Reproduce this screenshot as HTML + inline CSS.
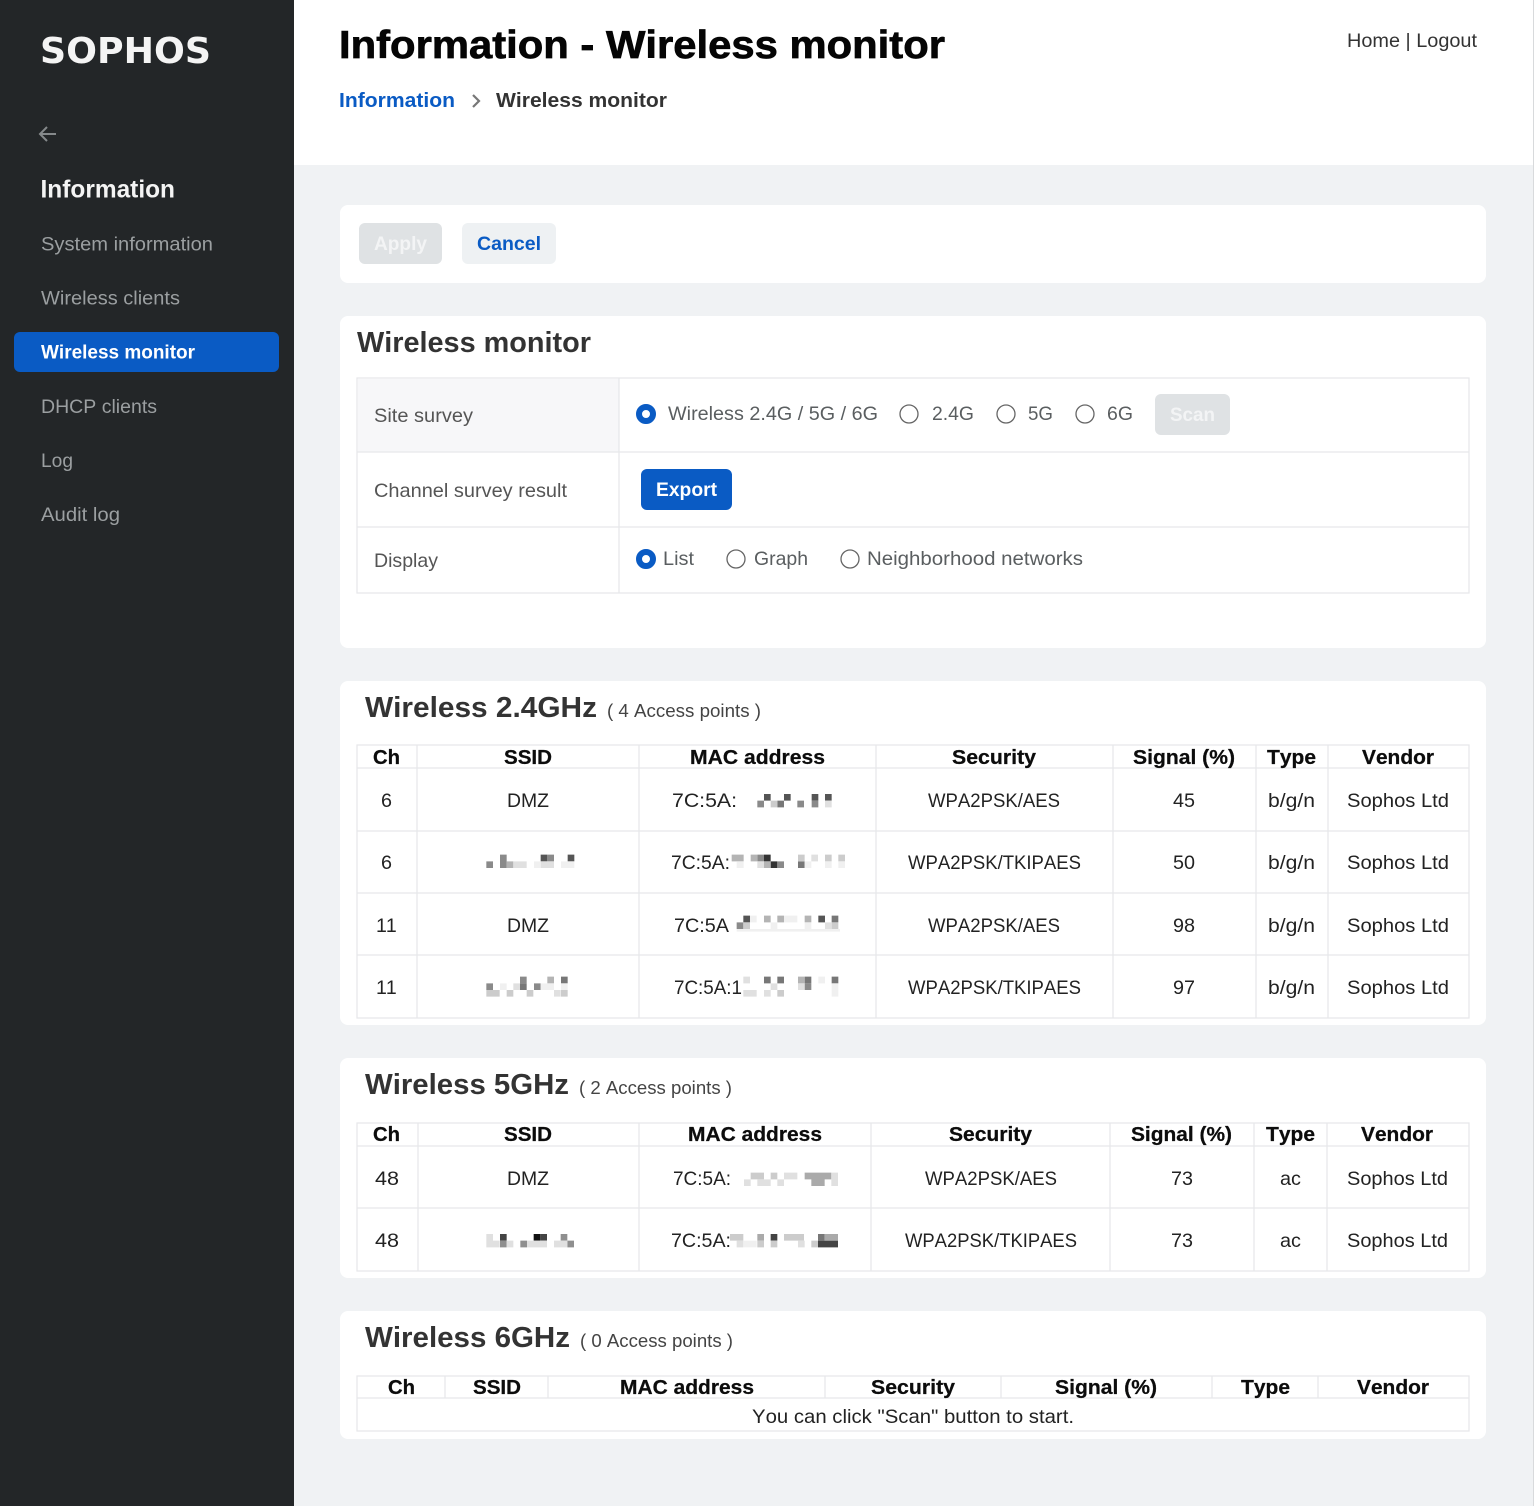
<!DOCTYPE html>
<html lang="en"><head><meta charset="utf-8"><title>Information - Wireless monitor</title>
<style>
html,body{margin:0;padding:0;width:1536px;height:1506px;overflow:hidden;background:#f0f2f4}
.b{position:absolute}
svg{position:absolute;left:0;top:0}
text{font-family:"Liberation Sans",sans-serif;font-size:19.5px;fill:#222;font-kerning:none}
.s{fill:#9b9fa1}
.l{fill:#555}
.o{fill:#5a5e60}
.h{font-weight:bold;font-size:20px;fill:#0c0c0c;stroke:#0c0c0c;stroke-width:.25px}
.t{font-weight:bold;font-size:29px;fill:#333}
.p{font-size:18px;fill:#444}
.w{font-weight:bold;fill:#fff}
</style></head><body>
<div class="b" style="left:0;top:0;width:294px;height:1506px;background:#232628"></div>
<div class="b" style="left:294px;top:0;width:1239px;height:165px;background:#fff"></div>
<div class="b" style="left:1533px;top:0;width:1px;height:1506px;background:#d8dadc"></div>
<div class="b" style="left:1534px;top:0;width:2px;height:1506px;background:#fff"></div>
<div class="b" style="left:14px;top:332px;width:265px;height:40px;background:#0a5bc4;border-radius:6px"></div>
<div class="b" style="left:340px;top:205px;width:1146px;height:78px;background:#fff;border-radius:8px"></div>
<div class="b" style="left:340px;top:316px;width:1146px;height:332px;background:#fff;border-radius:8px"></div>
<div class="b" style="left:340px;top:681px;width:1146px;height:344px;background:#fff;border-radius:8px"></div>
<div class="b" style="left:340px;top:1058px;width:1146px;height:220px;background:#fff;border-radius:8px"></div>
<div class="b" style="left:340px;top:1311px;width:1146px;height:128px;background:#fff;border-radius:8px"></div>
<div class="b" style="left:359px;top:223px;width:83px;height:41px;background:#dfe2e4;border-radius:6px"></div>
<div class="b" style="left:462px;top:223px;width:94px;height:41px;background:#eef1f3;border-radius:6px"></div>
<div class="b" style="left:358px;top:379px;width:261px;height:73px;background:#f7f7f9"></div>
<div class="b" style="left:1155px;top:394px;width:75px;height:41px;background:#dfe2e4;border-radius:6px"></div>
<div class="b" style="left:641px;top:469px;width:91px;height:41px;background:#0a5bc4;border-radius:6px"></div>

<svg width="1536" height="1506" viewBox="0 0 1536 1506" xmlns="http://www.w3.org/2000/svg">
<!-- Table lines -->
<g fill="none" stroke="#e7e8ea" stroke-width="1.3">
<path d="M357 378H1469V593H357ZM619 378V593M357 452H1469M357 527H1469"/>
<path d="M357 745H1469V1018H357ZM357 768H1469M357 831H1469M357 893H1469M357 955H1469M417 745V1018M639 745V1018M876 745V1018M1113 745V1018M1256 745V1018M1328 745V1018"/>
<path d="M357 1123H1469V1271H357ZM357 1146H1469M357 1208H1469M418 1123V1271M639 1123V1271M871 1123V1271M1110 1123V1271M1254 1123V1271M1327 1123V1271"/>
<path d="M357 1376H1469V1431H357ZM357 1398H1469M445 1376V1398M548 1376V1398M825 1376V1398M1001 1376V1398M1212 1376V1398M1318 1376V1398"/>
</g>
<!-- Logo and sidebar -->
<text x="40" y="63" textLength="171" lengthAdjust="spacingAndGlyphs" style="font-family:'DejaVu Sans',sans-serif;font-size:36px;font-weight:bold;fill:#f4f4f4">SOPHOS</text>
<path d="M56 134H40M47 127l-7 7 7 7" fill="none" stroke="#85898b" stroke-width="2"/>
<text x="40.5" y="197.5" textLength="134.5" lengthAdjust="spacingAndGlyphs" style="font-size:25px;font-weight:bold;fill:#f4f4f4">Information</text>
<text class="s" x="41" y="250.5" textLength="172" lengthAdjust="spacingAndGlyphs">System information</text>
<text class="s" x="41" y="304.5" textLength="139" lengthAdjust="spacingAndGlyphs">Wireless clients</text>
<text class="w" x="41" y="358.5" textLength="154" lengthAdjust="spacingAndGlyphs">Wireless monitor</text>
<text class="s" x="41" y="413" textLength="116" lengthAdjust="spacingAndGlyphs">DHCP clients</text>
<text class="s" x="41" y="467" textLength="32" lengthAdjust="spacingAndGlyphs">Log</text>
<text class="s" x="41" y="521" textLength="79" lengthAdjust="spacingAndGlyphs">Audit log</text>
<!-- Header -->
<text x="339" y="58" textLength="606" lengthAdjust="spacingAndGlyphs" style="font-size:39px;font-weight:bold;fill:#050505;stroke:#050505;stroke-width:.7px">Information - Wireless monitor</text>
<text x="339" y="107" textLength="116" lengthAdjust="spacingAndGlyphs" style="font-size:20.5px;font-weight:bold;fill:#0a5bc4">Information</text>
<path d="M473 95l6 6-6 6" fill="none" stroke="#777" stroke-width="2.2"/>
<text x="496" y="107" textLength="171" lengthAdjust="spacingAndGlyphs" style="font-size:20.5px;font-weight:bold;fill:#333">Wireless monitor</text>
<text x="1347" y="47" textLength="130" lengthAdjust="spacingAndGlyphs" style="fill:#333">Home | Logout</text>
<!-- Buttons -->
<text class="w" x="374" y="250" textLength="53" lengthAdjust="spacingAndGlyphs" style="fill:#f3f4f5">Apply</text>
<text x="477" y="250" textLength="64" lengthAdjust="spacingAndGlyphs" style="font-weight:bold;fill:#0a5bc4">Cancel</text>
<!-- Wireless monitor settings -->
<text class="t" x="357" y="352" textLength="234" lengthAdjust="spacingAndGlyphs">Wireless monitor</text>
<text class="l" x="374" y="422" textLength="99" lengthAdjust="spacingAndGlyphs">Site survey</text>
<text class="l" x="374" y="497" textLength="193" lengthAdjust="spacingAndGlyphs">Channel survey result</text>
<text class="l" x="374" y="567" textLength="64" lengthAdjust="spacingAndGlyphs">Display</text>
<g fill="#fff" stroke="#666" stroke-width="1.3">
<circle cx="909" cy="414" r="9"/><circle cx="1006" cy="414" r="9"/><circle cx="1085" cy="414" r="9"/><circle cx="736" cy="559" r="9"/><circle cx="850" cy="559" r="9"/>
</g>
<circle cx="646" cy="414" r="7" fill="#fff" stroke="#0a5bc4" stroke-width="6"/>
<circle cx="646" cy="559" r="7" fill="#fff" stroke="#0a5bc4" stroke-width="6"/>
<text class="o" x="668" y="420" textLength="210" lengthAdjust="spacingAndGlyphs">Wireless 2.4G / 5G / 6G</text>
<text class="o" x="932" y="420" textLength="42" lengthAdjust="spacingAndGlyphs">2.4G</text>
<text class="o" x="1028" y="420" textLength="25" lengthAdjust="spacingAndGlyphs">5G</text>
<text class="o" x="1107" y="420" textLength="26" lengthAdjust="spacingAndGlyphs">6G</text>
<text class="w" x="1170" y="421" textLength="45" lengthAdjust="spacingAndGlyphs" style="fill:#f3f4f5">Scan</text>
<text class="w" x="656" y="496" textLength="61" lengthAdjust="spacingAndGlyphs">Export</text>
<text class="o" x="663" y="565" textLength="31" lengthAdjust="spacingAndGlyphs">List</text>
<text class="o" x="754" y="565" textLength="54" lengthAdjust="spacingAndGlyphs">Graph</text>
<text class="o" x="867" y="565" textLength="216" lengthAdjust="spacingAndGlyphs">Neighborhood networks</text>
<!-- 2.4GHz -->
<text class="t" x="365" y="717" textLength="232" lengthAdjust="spacingAndGlyphs">Wireless 2.4GHz</text>
<text class="p" x="607" y="717" textLength="154" lengthAdjust="spacingAndGlyphs">( 4 Access points )</text>
<text class="h" x="373" y="764" textLength="27" lengthAdjust="spacingAndGlyphs">Ch</text>
<text class="h" x="504" y="764" textLength="48" lengthAdjust="spacingAndGlyphs">SSID</text>
<text class="h" x="690" y="764" textLength="135" lengthAdjust="spacingAndGlyphs">MAC address</text>
<text class="h" x="952" y="764" textLength="84" lengthAdjust="spacingAndGlyphs">Security</text>
<text class="h" x="1133" y="764" textLength="102" lengthAdjust="spacingAndGlyphs">Signal (%)</text>
<text class="h" x="1267" y="764" textLength="49" lengthAdjust="spacingAndGlyphs">Type</text>
<text class="h" x="1362" y="764" textLength="72" lengthAdjust="spacingAndGlyphs">Vendor</text>
<text x="381" y="807" textLength="11" lengthAdjust="spacingAndGlyphs">6</text>
<text x="507" y="807" textLength="42" lengthAdjust="spacingAndGlyphs">DMZ</text>
<text x="672" y="807" textLength="65" lengthAdjust="spacingAndGlyphs">7C:5A:</text>
<text x="928" y="807" textLength="132" lengthAdjust="spacingAndGlyphs">WPA2PSK/AES</text>
<text x="1173" y="807" textLength="22" lengthAdjust="spacingAndGlyphs">45</text>
<text x="1268" y="807" textLength="47" lengthAdjust="spacingAndGlyphs">b/g/n</text>
<text x="1347" y="807" textLength="102" lengthAdjust="spacingAndGlyphs">Sophos Ltd</text>
<text x="381" y="869" textLength="11" lengthAdjust="spacingAndGlyphs">6</text>
<text x="671" y="869" textLength="59" lengthAdjust="spacingAndGlyphs">7C:5A:</text>
<text x="908" y="869" textLength="173" lengthAdjust="spacingAndGlyphs">WPA2PSK/TKIPAES</text>
<text x="1173" y="869" textLength="22" lengthAdjust="spacingAndGlyphs">50</text>
<text x="1268" y="869" textLength="47" lengthAdjust="spacingAndGlyphs">b/g/n</text>
<text x="1347" y="869" textLength="102" lengthAdjust="spacingAndGlyphs">Sophos Ltd</text>
<text x="376" y="932" style="letter-spacing:-1px">11</text>
<text x="507" y="932" textLength="42" lengthAdjust="spacingAndGlyphs">DMZ</text>
<text x="674" y="932" textLength="55" lengthAdjust="spacingAndGlyphs">7C:5A</text>
<text x="928" y="932" textLength="132" lengthAdjust="spacingAndGlyphs">WPA2PSK/AES</text>
<text x="1173" y="932" textLength="22" lengthAdjust="spacingAndGlyphs">98</text>
<text x="1268" y="932" textLength="47" lengthAdjust="spacingAndGlyphs">b/g/n</text>
<text x="1347" y="932" textLength="102" lengthAdjust="spacingAndGlyphs">Sophos Ltd</text>
<text x="376" y="994" style="letter-spacing:-1px">11</text>
<text x="674" y="994" textLength="68" lengthAdjust="spacingAndGlyphs">7C:5A:1</text>
<text x="908" y="994" textLength="173" lengthAdjust="spacingAndGlyphs">WPA2PSK/TKIPAES</text>
<text x="1173" y="994" textLength="22" lengthAdjust="spacingAndGlyphs">97</text>
<text x="1268" y="994" textLength="47" lengthAdjust="spacingAndGlyphs">b/g/n</text>
<text x="1347" y="994" textLength="102" lengthAdjust="spacingAndGlyphs">Sophos Ltd</text>
<!-- 5GHz -->
<text class="t" x="365" y="1094" textLength="204" lengthAdjust="spacingAndGlyphs">Wireless 5GHz</text>
<text class="p" x="579" y="1094" textLength="153" lengthAdjust="spacingAndGlyphs">( 2 Access points )</text>
<text class="h" x="373" y="1141" textLength="27" lengthAdjust="spacingAndGlyphs">Ch</text>
<text class="h" x="504" y="1141" textLength="48" lengthAdjust="spacingAndGlyphs">SSID</text>
<text class="h" x="688" y="1141" textLength="134" lengthAdjust="spacingAndGlyphs">MAC address</text>
<text class="h" x="949" y="1141" textLength="83" lengthAdjust="spacingAndGlyphs">Security</text>
<text class="h" x="1131" y="1141" textLength="101" lengthAdjust="spacingAndGlyphs">Signal (%)</text>
<text class="h" x="1266" y="1141" textLength="49" lengthAdjust="spacingAndGlyphs">Type</text>
<text class="h" x="1361" y="1141" textLength="72" lengthAdjust="spacingAndGlyphs">Vendor</text>
<text x="375" y="1185" textLength="24" lengthAdjust="spacingAndGlyphs">48</text>
<text x="507" y="1185" textLength="42" lengthAdjust="spacingAndGlyphs">DMZ</text>
<text x="673" y="1185" textLength="58" lengthAdjust="spacingAndGlyphs">7C:5A:</text>
<text x="925" y="1185" textLength="132" lengthAdjust="spacingAndGlyphs">WPA2PSK/AES</text>
<text x="1171" y="1185" textLength="22" lengthAdjust="spacingAndGlyphs">73</text>
<text x="1280" y="1185" textLength="21" lengthAdjust="spacingAndGlyphs">ac</text>
<text x="1347" y="1185" textLength="101" lengthAdjust="spacingAndGlyphs">Sophos Ltd</text>
<text x="375" y="1247" textLength="24" lengthAdjust="spacingAndGlyphs">48</text>
<text x="671" y="1247" textLength="60" lengthAdjust="spacingAndGlyphs">7C:5A:</text>
<text x="905" y="1247" textLength="172" lengthAdjust="spacingAndGlyphs">WPA2PSK/TKIPAES</text>
<text x="1171" y="1247" textLength="22" lengthAdjust="spacingAndGlyphs">73</text>
<text x="1280" y="1247" textLength="21" lengthAdjust="spacingAndGlyphs">ac</text>
<text x="1347" y="1247" textLength="101" lengthAdjust="spacingAndGlyphs">Sophos Ltd</text>
<!-- 6GHz -->
<text class="t" x="365" y="1347" textLength="205" lengthAdjust="spacingAndGlyphs">Wireless 6GHz</text>
<text class="p" x="580" y="1347" textLength="153" lengthAdjust="spacingAndGlyphs">( 0 Access points )</text>
<text class="h" x="388" y="1394" textLength="27" lengthAdjust="spacingAndGlyphs">Ch</text>
<text class="h" x="473" y="1394" textLength="48" lengthAdjust="spacingAndGlyphs">SSID</text>
<text class="h" x="620" y="1394" textLength="134" lengthAdjust="spacingAndGlyphs">MAC address</text>
<text class="h" x="871" y="1394" textLength="84" lengthAdjust="spacingAndGlyphs">Security</text>
<text class="h" x="1055" y="1394" textLength="102" lengthAdjust="spacingAndGlyphs">Signal (%)</text>
<text class="h" x="1241" y="1394" textLength="49" lengthAdjust="spacingAndGlyphs">Type</text>
<text class="h" x="1357" y="1394" textLength="72" lengthAdjust="spacingAndGlyphs">Vendor</text>
<text x="752" y="1423" textLength="322" lengthAdjust="spacingAndGlyphs">You can click &quot;Scan&quot; button to start.</text>
<!-- Pixelated redactions -->
<g transform="translate(340 740) scale(.33333)">
<path fill="#555" d="M1272 162h20v20h-20zM1332 162h20v20h-20zM1415 162h20v20h-20zM1455 162h20v20h-20zM602 344h20v20h-20zM683 344h20v20h-20zM1210 527h20v20h-20zM1435 527h20v20h-20z"/>
<path fill="#333" d="M1272 344h20v20h-20zM1292 364h20v20h-20z"/>
<path fill="#777" d="M1312 182h20v20h-20zM1374 364h20v20h-20zM1475 527h20v20h-20zM540 730h20v20h-20zM663 710h20v20h-20zM1272 710h20v20h-20zM1312 710h20v20h-20zM1394 710h20v20h-20zM1475 710h20v20h-20z"/>
<path fill="#8a8a8a" d="M1252 182h20v20h-20zM1372 182h20v20h-20zM1415 182h20v20h-20zM439 364h20v20h-20zM480 344h20v40h-20zM622 344h20v20h-20zM1252 344h20v20h-20zM1312 364h20v20h-20zM1190 547h20v20h-20zM439 730h20v20h-20zM582 730h20v20h-20zM540 710h20v20h-20zM1394 730h20v20h-20z"/>
<path fill="#b4b4b4" d="M500 364h20v20h-20zM1175 344h36v20h-36zM1232 344h20v20h-20zM1272 364h20v20h-20zM1272 527h20v20h-20zM1312 527h20v20h-20zM1394 527h20v20h-20zM622 710h20v20h-20zM1374 710h20v20h-20z"/>
<path fill="#ccc" d="M1292 182h20v20h-20zM1374 344h20v20h-20zM1455 344h20v20h-20zM1495 344h20v20h-20zM1210 547h20v20h-20zM1475 547h20v20h-20zM439 750h40v20h-40zM500 750h20v20h-20zM560 750h20v20h-20zM663 750h20v20h-20zM1312 750h20v20h-20z"/>
<path fill="#e0e0e0" d="M520 364h40v20h-40zM602 364h40v20h-40zM1252 364h20v20h-20zM1414 344h20v20h-20zM1455 547h20v20h-20zM520 730h20v20h-20zM642 750h20v20h-20zM1210 710h20v20h-20zM1210 750h40v20h-40zM1272 750h20v20h-20zM1292 730h20v20h-20zM1374 730h20v20h-20zM1455 182h20v20h-20z"/>
<path fill="#f0f0f0" d="M582 364h20v20h-20zM663 364h40v20h-40zM1190 364h21v20h-21zM1394 364h20v20h-20zM1455 364h20v20h-20zM1495 364h20v20h-20zM1230 527h20v20h-20zM1292 547h20v20h-20zM1332 527h40v20h-40zM1394 547h20v20h-20zM480 730h20v20h-20zM602 730h40v20h-40zM663 730h20v20h-20zM1435 710h20v20h-20zM1475 730h20v40h-20zM1190 567h310v8h-310z"/>
</g>
<g transform="translate(340 1120) scale(.33333)">
<path fill="#111" d="M581 342h20v20h-20z"/>
<path fill="#444" d="M480 342h20v20h-20zM601 342h20v20h-20zM1434 362h60v20h-60zM1292 342h20v20h-20z"/>
<path fill="#777" d="M1434 342h20v20h-20z"/>
<path fill="#8f8f8f" d="M480 362h20v20h-20zM541 362h20v20h-20zM682 362h20v20h-20zM662 342h20v20h-20z"/>
<path fill="#aaa" d="M1394 158h40v20h-40zM1434 158h20v20h-20zM1454 158h20v20h-20zM1414 178h40v20h-40zM1252 342h20v20h-20zM1454 342h40v20h-40z"/>
<path fill="#ccc" d="M1232 158h40v20h-40zM1292 158h20v20h-20zM1170 342h40v20h-40zM1332 342h60v20h-60zM1252 362h20v20h-20zM1292 362h20v20h-20zM1414 362h20v20h-20z"/>
<path fill="#e0e0e0" d="M1212 178h20v20h-20zM1252 178h20v20h-20zM1272 178h20v20h-20zM1312 178h20v20h-20zM1332 158h40v20h-40zM1474 158h20v40h-20zM439 342h20v40h-20zM459 362h20v20h-20zM500 362h20v20h-20zM561 362h60v20h-60zM642 362h40v20h-40zM1190 362h20v20h-20zM1374 362h20v20h-20z"/>
<path fill="#f0f0f0" d="M1210 362h40v20h-40z"/>
</g>
</svg>
</body></html>
